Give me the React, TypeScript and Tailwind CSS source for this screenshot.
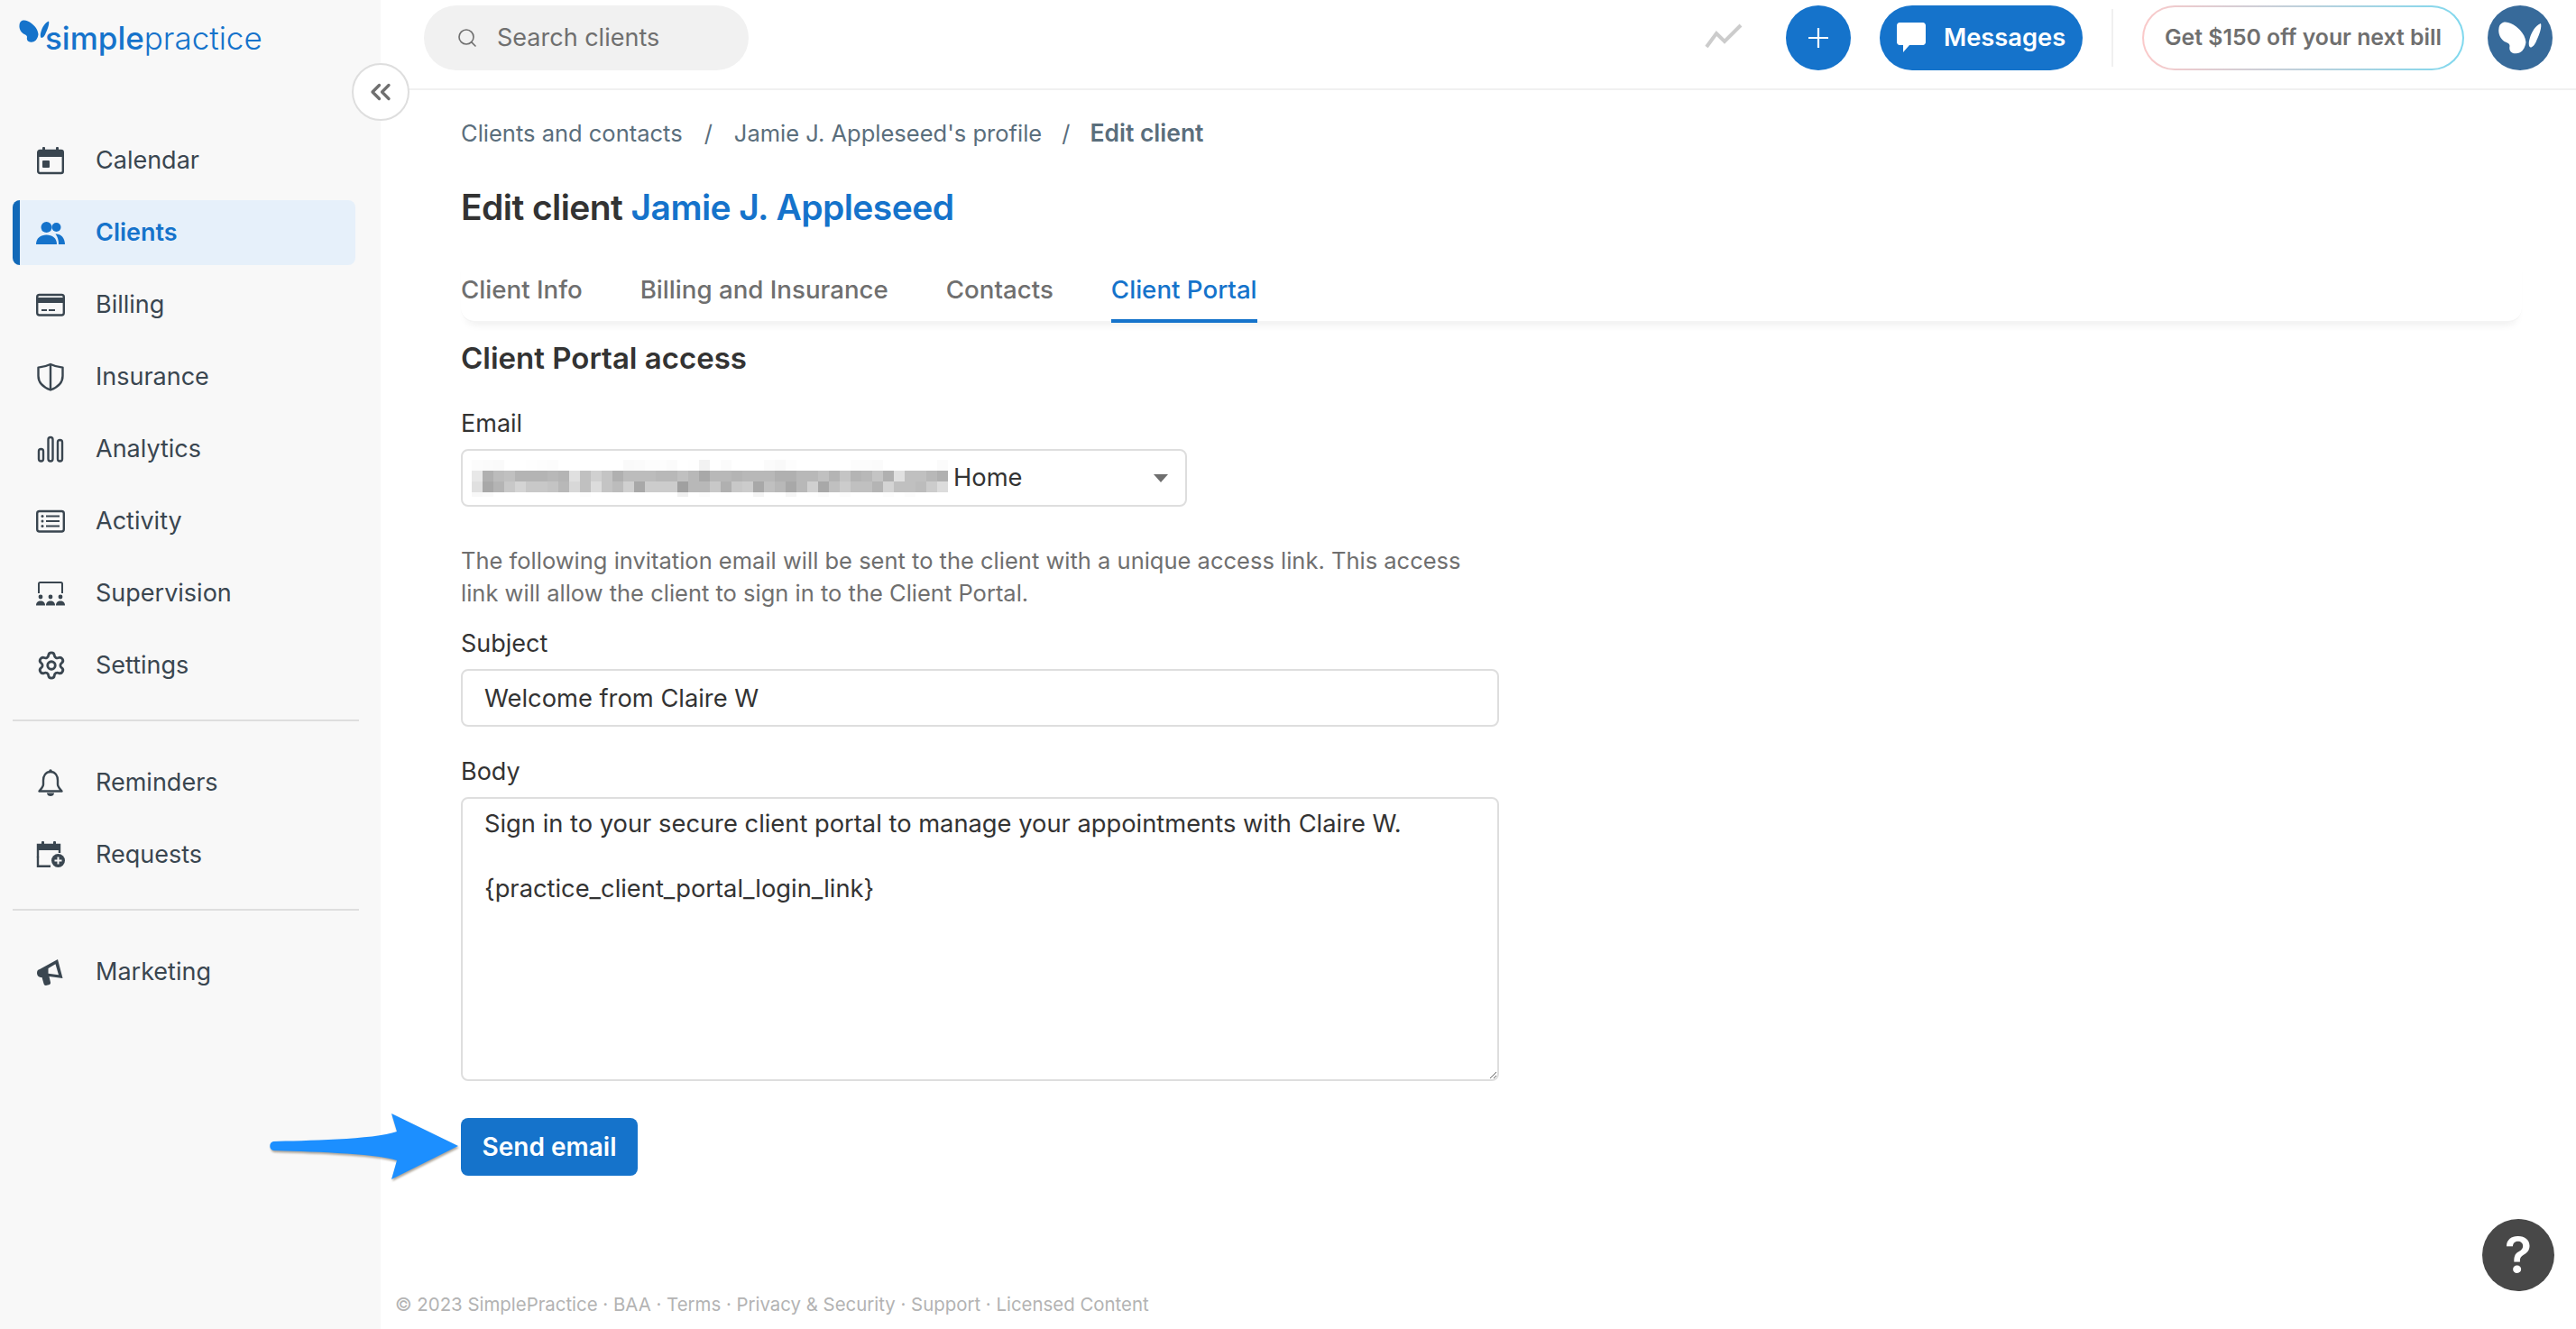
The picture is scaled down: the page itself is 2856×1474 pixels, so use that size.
import React from "react";
import { ChevronsLeft, Search, Settings } from "lucide-react";

const Butterfly: React.FC<{ className?: string }> = ({ className }) => (
    <svg viewBox="0 0 36 30" className={className} fill="currentColor">
        <path d="M3 4C6 1 11 3 15 6C19 9 22 13 22.5 18C22 22 20 26 16 26.5C12 27.5 9 25 10 21C10 19.5 8.5 18.5 7 18C3.5 16.5 1 12 1.5 8C1.7 6 2 5 3 4Z" />
        <path d="M34 3.5C35 6 33 12 31 16C30 19 28 22 26 22C24.5 21.5 24.5 18 25.5 15C27 10 30 5 34 3.5Z" />
    </svg>
);

const CalendarIcon = () => (
    <svg viewBox="0 0 32 32" className="h-8 w-8" fill="currentColor">
        <rect x="2.2" y="5" width="27.6" height="25" rx="2" fill="none" stroke="currentColor" strokeWidth="2.4" />
        <rect x="2" y="5" width="28" height="7" />
        <rect x="7" y="1" width="3" height="5" rx="1" />
        <rect x="22" y="1" width="3" height="5" rx="1" />
        <rect x="7" y="16" width="8" height="8" rx="1" />
    </svg>
);
const ClientsIcon = () => (
    <svg viewBox="0 0 32 32" className="h-8 w-8" fill="currentColor">
        <circle cx="11.5" cy="10" r="6" />
        <circle cx="22.5" cy="10" r="5" />
        <path d="M0 29C0 22 5 18.5 11.5 18.5C18 18.5 23 22 23 29H0Z" />
        <path d="M21.5 17.5C27 17 32 21.5 32 29H25C25 24.5 24 20.5 21.5 17.5Z" />
    </svg>
);
const BillingIcon = () => (
    <svg viewBox="0 0 32 32" className="h-8 w-8" fill="currentColor">
        <rect x="1.2" y="5" width="29.6" height="22.5" rx="2.5" fill="none" stroke="currentColor" strokeWidth="2.4" />
        <rect x="1" y="8" width="30" height="6" />
        <rect x="6" y="21" width="6" height="2" />
        <rect x="14" y="21" width="7" height="2" />
    </svg>
);
const InsuranceIcon = () => (
    <svg viewBox="0 0 32 32" className="h-8 w-8" fill="none" stroke="currentColor" strokeWidth="2.4">
        <path d="M16 2C20 4 25 5.2 29.5 5.6V15C29.5 22 24 27.5 16 30.5C8 27.5 2.5 22 2.5 15V5.6C7 5.2 12 4 16 2Z" strokeLinejoin="round" />
        <path d="M16 2V30" />
    </svg>
);
const AnalyticsIcon = () => (
    <svg viewBox="0 0 32 32" className="h-8 w-8" fill="none" stroke="currentColor" strokeWidth="2.4">
        <rect x="3" y="16" width="5" height="13.5" rx="2.5" />
        <rect x="13.5" y="3" width="5" height="26.5" rx="2.5" />
        <rect x="24" y="6" width="5" height="23.5" rx="2.5" />
    </svg>
);
const ActivityIcon = () => (
    <svg viewBox="0 0 32 32" className="h-8 w-8" fill="currentColor">
        <rect x="1.2" y="5" width="29.6" height="22.5" rx="2.5" fill="none" stroke="currentColor" strokeWidth="2.4" />
        <circle cx="7" cy="10.5" r="1.5" />
        <circle cx="7" cy="16" r="1.5" />
        <circle cx="7" cy="21.5" r="1.5" />
        <rect x="11" y="9.5" width="15" height="2" />
        <rect x="11" y="15" width="15" height="2" />
        <rect x="11" y="20.5" width="15" height="2" />
    </svg>
);
const SupervisionIcon = () => (
    <svg viewBox="0 0 32 32" className="h-8 w-8" fill="currentColor">
        <path d="M3 16V5.5C3 4.7 3.7 4 4.5 4H27.5C28.3 4 29 4.7 29 5.5V16" fill="none" stroke="currentColor" strokeWidth="2" />
        <circle cx="5" cy="20" r="2.4" />
        <circle cx="16" cy="20" r="2.4" />
        <circle cx="27" cy="20" r="2.4" />
        <path d="M0 29.5C0 26 2 24.5 5 24.5C8 24.5 10 26 10 29.5H0Z" />
        <path d="M11 29.5C11 26 13 24.5 16 24.5C19 24.5 21 26 21 29.5H11Z" />
        <path d="M22 29.5C22 26 24 24.5 27 24.5C30 24.5 32 26 32 29.5H22Z" />
    </svg>
);
const BellIcon = () => (
    <svg viewBox="0 0 32 32" className="h-8 w-8" fill="none" stroke="currentColor" strokeWidth="2.4">
        <path d="M16 4C10.5 4 8 8.5 8 13.5V18C8 20.5 5.5 23 3.5 25.5H28.5C26.5 23 24 20.5 24 18V13.5C24 8.5 21.5 4 16 4Z" strokeLinejoin="round" />
        <circle cx="16" cy="3" r="1.8" fill="currentColor" stroke="none" />
        <path d="M12 27.5H20C20 30 18 31 16 31C14 31 12 30 12 27.5Z" fill="currentColor" stroke="none" />
    </svg>
);
const RequestsIcon = () => (
    <svg viewBox="0 0 32 32" className="h-8 w-8" fill="currentColor">
        <path d="M2 19V5H26V14" fill="none" stroke="currentColor" strokeWidth="2.4" />
        <path d="M2 18V28.8H16" fill="none" stroke="currentColor" strokeWidth="2.4" />
        <rect x="1" y="4" width="26" height="7" />
        <rect x="6" y="1" width="3" height="5" rx="1" />
        <rect x="19" y="1" width="3" height="5" rx="1" />
        <circle cx="24.5" cy="22.5" r="7.5" />
        <rect x="23.5" y="18.5" width="2" height="8" fill="#f8f8f8" />
        <rect x="20.5" y="21.5" width="8" height="2" fill="#f8f8f8" />
    </svg>
);
const MarketingIcon = () => (
    <svg viewBox="0 0 32 32" className="h-8 w-8" fill="currentColor">
        <path d="M1 17C1 14.5 2 13.5 4 13L24 2L29.5 23L14.5 21L16 27.5C16.3 29 15.5 30 14 30.3L11 31C9.8 31.2 9 30.5 8.6 29.3L6.5 22C3 22 1 20 1 17Z" />
        <path d="M21.5 7.2L13.5 12V17.8L25 19.3Z" fill="#f8f8f8" />
    </svg>
);

const navTop = [
    { label: "Calendar", icon: <CalendarIcon /> },
    { label: "Clients", icon: <ClientsIcon />, active: true },
    { label: "Billing", icon: <BillingIcon /> },
    { label: "Insurance", icon: <InsuranceIcon /> },
    { label: "Analytics", icon: <AnalyticsIcon /> },
    { label: "Activity", icon: <ActivityIcon /> },
    { label: "Supervision", icon: <SupervisionIcon /> },
    { label: "Settings", icon: <Settings size={34} strokeWidth={2} /> },
];

const NavItem: React.FC<{ label: string; icon: React.ReactNode; active?: boolean }> = ({ label, icon, active }) => (
    <a
        className={`flex h-[72px] w-[380px] items-center rounded-lg border-l-8 pl-[18px] text-[27px] ${active ? "border-[#1269b8] bg-[#e6f0fa] font-semibold text-[#1573cb]" : "border-transparent text-[#3a4650]"}`}
    >
        <span className="flex w-[66px] shrink-0 items-center">{icon}</span>
        <span className="pt-[1px]">{label}</span>
    </a>
);

// pixelated block over the client's address, 12px squares
const mosaicRows = [
    [0xfc, 0xfb, 0xfa, 0xff, 0xff, 0xfe, 0xfd, 0xfc, 0xff, 0xff, 0xff, 0xff, 0xff, 0xff, 0xfa, 0xfb, 0xfd, 0xfd, 0xfb, 0xff, 0xfe, 0xf2, 0xff, 0xfb, 0xff, 0xff, 0xff, 0xfb, 0xf9, 0xfd, 0xff, 0xff, 0xff, 0xff, 0xff, 0xfc, 0xfc, 0xfb, 0xff, 0xff, 0xff, 0xff, 0xff, 0xfb],
    [0xe8, 0xb0, 0xbc, 0xc0, 0xb4, 0xb4, 0xb4, 0xb8, 0xb4, 0xe0, 0xc0, 0xd0, 0xc4, 0xb0, 0xbc, 0xbc, 0xbc, 0xb8, 0xb8, 0xc0, 0xb8, 0xa8, 0xb8, 0xb8, 0xb4, 0xb8, 0xb8, 0xb8, 0xb0, 0xb0, 0xb8, 0xb8, 0xc0, 0xb4, 0xc4, 0xb4, 0xb8, 0xc4, 0xb0, 0xe0, 0xc0, 0xc0, 0xb8, 0xb0],
    [0xe0, 0xa8, 0xb4, 0xc8, 0xd4, 0xc8, 0xc8, 0xc4, 0xb8, 0xd8, 0xc0, 0xdc, 0xc4, 0xbc, 0xd0, 0xa8, 0xcc, 0xcc, 0xcc, 0xa0, 0xb8, 0xb8, 0xc8, 0xb0, 0xc8, 0xcc, 0xa8, 0xc0, 0xb8, 0xa8, 0xb8, 0xd0, 0xa8, 0xc0, 0xcc, 0xc0, 0xc0, 0xb4, 0xd4, 0xc0, 0xc0, 0xbc, 0xcc, 0xdc],
    [0xf8, 0xfa, 0xff, 0xff, 0xff, 0xff, 0xff, 0xff, 0xff, 0xff, 0xfd, 0xff, 0xff, 0xff, 0xff, 0xff, 0xff, 0xff, 0xff, 0xf0, 0xff, 0xfc, 0xff, 0xff, 0xff, 0xff, 0xf4, 0xff, 0xff, 0xf6, 0xff, 0xfe, 0xfb, 0xff, 0xfc, 0xff, 0xff, 0xff, 0xfc, 0xff, 0xfc, 0xff, 0xff, 0xff],
];

const Mosaic = () => (
    <div className="flex flex-col">
        {mosaicRows.map((row, y) => (
            <div key={y} className={`flex ${y === 3 ? "h-[5px]" : "h-3"}`}>
                {row.map((g, x) => (
                    <span key={x} className="h-full w-3" style={{ backgroundColor: `rgb(${g},${g},${g})` }} />
                ))}
            </div>
        ))}
    </div>
);

const Field: React.FC<{ label: string; className?: string; children: React.ReactNode }> = ({ label, className, children }) => (
    <div className={className}>
        <label className="block text-[27px] leading-9 text-[#333333]">{label}</label>
        <div className="mt-2.5">{children}</div>
    </div>
);

const tabs = ["Client Info", "Billing and Insurance", "Contacts", "Client Portal"];
const footerLinks = ["BAA", "Terms", "Privacy & Security", "Support", "Licensed Content"];

export default function App() {
    return (
        <div className="relative flex h-[1474px] w-[2856px] overflow-hidden bg-white font-['Inter',sans-serif] text-[#333333]">
            <aside className="flex w-[422px] shrink-0 flex-col bg-[#f8f8f8] px-[14px]">
                <div className="flex h-[142px] items-start pl-[6px] pt-2.5 text-[#1573cb]">
                    <Butterfly className="mt-[10px] h-[30px] w-9 shrink-0" />
                    <span className="-ml-[6px] mt-[6px] text-[35px] leading-[52px]">
                        <span className="font-medium">simple</span>
                        <span className="font-light">practice</span>
                    </span>
                </div>
                <nav className="flex flex-col gap-2">
                    {navTop.map(n => <NavItem key={n.label} {...n} />)}
                </nav>
                <div className="mt-[24px] h-[2px] w-[384px] bg-[#dedede]" />
                <nav className="mt-[32px] flex flex-col gap-2">
                    <NavItem label="Reminders" icon={<BellIcon />} />
                    <NavItem label="Requests" icon={<RequestsIcon />} />
                </nav>
                <div className="mt-[24px] h-[2px] w-[384px] bg-[#dedede]" />
                <nav className="mt-[32px]">
                    <NavItem label="Marketing" icon={<MarketingIcon />} />
                </nav>
            </aside>

            <main className="flex min-w-0 flex-1 flex-col">
                <header className="flex h-[100px] shrink-0 items-start border-b-2 border-[#f0f0f0] pl-[48px] pr-[26px] pt-[6px]">
                    <div className="flex h-[72px] w-[360px] items-center rounded-full bg-[#f1f1f1] pl-[36px] text-[27px] text-[#6f6f6f]">
                        <Search size={24} strokeWidth={1.6} className="mr-[21px] shrink-0" />
                        Search clients
                    </div>
                    <svg viewBox="0 0 42 28" className="ml-auto mt-[20px] h-[28px] w-[42px]" fill="none" stroke="#cccccc" strokeWidth="4">
                        <path d="M2 26L13 11L22 20L40 2" />
                    </svg>
                    <button className="ml-[48px] flex h-[72px] w-[72px] items-center justify-center rounded-full bg-[#1573cb] text-white">
                        <svg viewBox="0 0 24 24" className="h-[22px] w-[22px]" stroke="currentColor" strokeWidth="2.4"><path d="M12 0V24M0 12H24" /></svg>
                    </button>
                    <button className="ml-8 flex h-[72px] w-[225px] items-center rounded-full bg-[#1573cb] pl-[19px] text-[27.3px] font-semibold text-white">
                        <svg viewBox="0 0 32 34" className="mr-[20px] h-[34px] w-8" fill="currentColor">
                            <path d="M3 0H29C30.5 0 32 1.5 32 3V22C32 23.5 30.5 25 29 25H14L7 33V25H3C1.5 25 0 23.5 0 22V3C0 1.5 1.5 0 3 0Z" />
                        </svg>
                        Messages
                    </button>
                    <div className="ml-8 mt-1 h-16 w-[2px] bg-[#f0f0f0]" />
                    <button className="ml-8 flex h-[72px] w-[357px] items-center justify-center rounded-full border-2 border-transparent text-[24.8px] font-semibold text-[#6f6f6f] [background:linear-gradient(white,white)_padding-box,linear-gradient(90deg,#fbc9c9,#7fd8ee)_border-box]">
                        Get $150 off your next bill
                    </button>
                    <div className="ml-[26px] flex h-[72px] w-[72px] items-center justify-center rounded-full bg-[#376a9a] text-white">
                        <Butterfly className="h-[43px] w-[52px]" />
                    </div>
                </header>

                <div className="pl-[89px] pr-[60px]">
                    <div className="mt-[30px] flex h-9 items-center text-[25.5px] text-[#5a6e7c]">
                        <span>Clients and contacts</span>
                        <span className="mx-[24px]">/</span>
                        <span>Jamie J. Appleseed's profile</span>
                        <span className="mx-[22px]">/</span>
                        <span className="text-[26.5px] font-semibold">Edit client</span>
                    </div>
                    <h1 className="mt-[40px] text-[39px] font-semibold leading-[48px] tracking-[-0.57px] text-[#333333]">
                        Edit client <span className="text-[#1573cb]">Jamie J. Appleseed</span>
                    </h1>
                    <div className="mt-[32px] flex gap-[64px] rounded-b-2xl border-b-2 border-[#f4f4f4] shadow-[0_8px_10px_-6px_rgba(0,0,0,0.07)]">
                        {tabs.map(t => (
                            <div
                                key={t}
                                className={`-mb-[2px] flex h-[72px] items-center border-y-4 border-t-transparent text-[27.7px] font-medium ${t === "Client Portal" ? "border-b-[#1573cb] text-[#1573cb]" : "border-b-transparent text-[#6f6f6f]"}`}
                            >
                                {t}
                            </div>
                        ))}
                    </div>
                    <h2 className="mt-[19px] text-[33px] font-semibold leading-10 text-[#333333]">Client Portal access</h2>

                    <Field label="Email" className="mt-[35px]">
                        <div className="flex h-16 w-[805px] items-center rounded-lg border-2 border-[#dedede] pl-[10px] pr-[19px] text-[27.3px]">
                            <Mosaic />
                            <span className="ml-[6px]">Home</span>
                            <svg viewBox="0 0 16 9" className="ml-auto h-[9px] w-4" fill="#6f6f6f"><path d="M0 0H16L8 9Z" /></svg>
                        </div>
                    </Field>

                    <p className="mt-[42px] w-[1150px] text-[25.5px] leading-9 text-[#6f6f6f]">
                        The following invitation email will be sent to the client with a unique access link. This access link will allow the client to sign in to the Client Portal.
                    </p>

                    <Field label="Subject" className="mt-5">
                        <input
                            defaultValue="Welcome from Claire W"
                            className="block h-16 w-[1151px] rounded-lg border-2 border-[#dedede] px-6 text-[27.3px] text-[#333333] outline-none"
                        />
                    </Field>

                    <Field label="Body" className="mt-8">
                        <textarea
                            defaultValue={"Sign in to your secure client portal to manage your appointments with Claire W.\n\n{practice_client_portal_login_link}"}
                            className="block h-[315px] w-[1151px] rounded-lg border-2 border-[#dedede] px-6 py-2.5 text-[27.3px] leading-9 text-[#333333] outline-none"
                        />
                    </Field>

                    <button className="mt-[41px] h-16 w-[196px] rounded-lg bg-[#1573cb] text-[28px] font-semibold text-white">Send email</button>
                </div>

                <footer className="mt-auto flex pb-[13px] pl-[16px] text-[20.4px] leading-7 text-[#b3b3b3]">
                    © 2023 SimplePractice
                    {footerLinks.map(l => <span key={l}>&nbsp;·&nbsp;{l}</span>)}
                </footer>
            </main>

            <button className="absolute left-[390px] top-[70px] flex h-16 w-16 items-center justify-center rounded-full border-2 border-[#dedede] bg-white text-[#6f6f6f]">
                <ChevronsLeft size={36} strokeWidth={2.2} />
            </button>

            <svg viewBox="0 0 220 85" className="absolute left-[295px] top-[1230px] h-[85px] w-[220px] drop-shadow-[1px_2px_1px_rgba(80,60,30,0.45)]" fill="#1c8fff">
                <path d="M8 36C40 35 120 34 145 25L139 5L213 41L139 78L145 57C120 49 40 47 8 46C3 45 3 37 8 36Z" />
            </svg>

            <button className="absolute left-[2752px] top-[1352px] flex h-20 w-20 items-center justify-center rounded-full bg-[#484848] text-[56px] font-semibold text-white">?</button>
        </div>
    );
}
